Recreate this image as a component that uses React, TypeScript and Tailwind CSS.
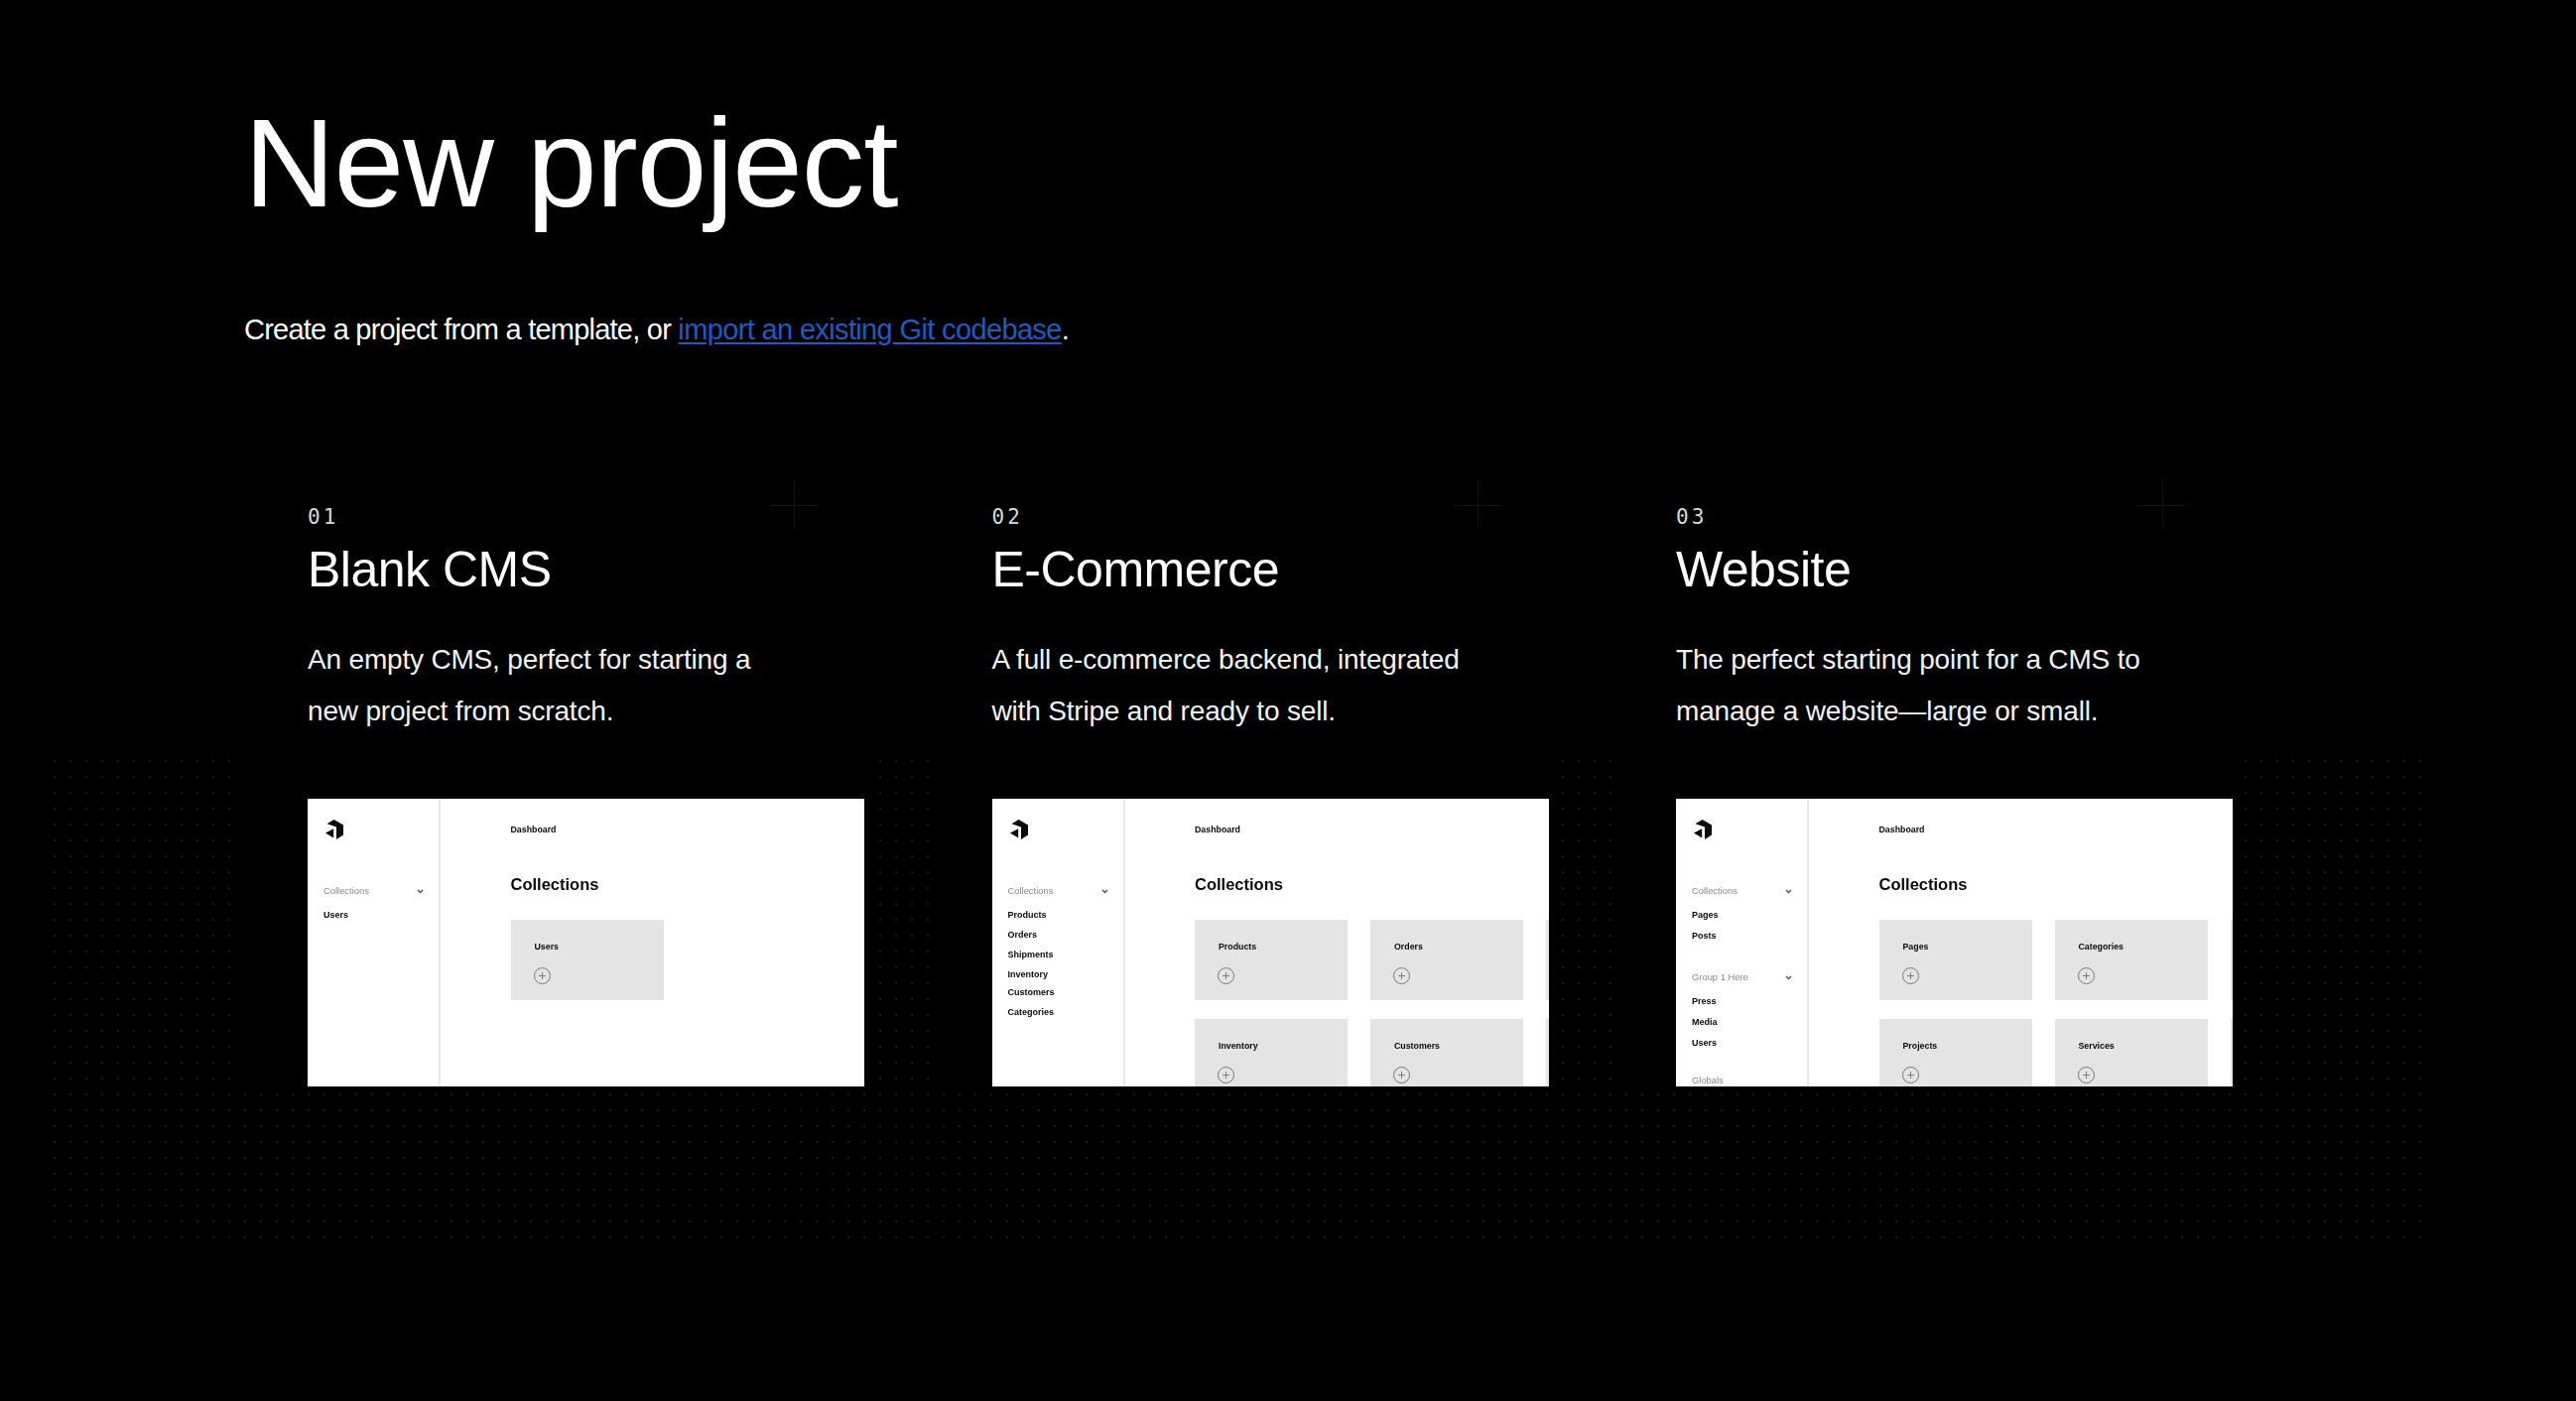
import React from "react";

type NavRow = { label: string; muted?: boolean; chevron?: boolean; className: string };

interface Template {
  num: string;
  title: string;
  lines: string[];
  nav: NavRow[];
  cards: string[];
}

const templates: Template[] = [
  {
    num: "01",
    title: "Blank CMS",
    lines: ["An empty CMS, perfect for starting a", "new project from scratch."],
    nav: [
      { label: "Collections", muted: true, chevron: true, className: "mt-[47px]" },
      { label: "Users", className: "mt-[14px]" },
    ],
    cards: ["Users"],
  },
  {
    num: "02",
    title: "E-Commerce",
    lines: ["A full e-commerce backend, integrated", "with Stripe and ready to sell."],
    nav: [
      { label: "Collections", muted: true, chevron: true, className: "mt-[47px]" },
      { label: "Products", className: "mt-[14px]" },
      { label: "Orders", className: "mt-[10px]" },
      { label: "Shipments", className: "mt-[10px]" },
      { label: "Inventory", className: "mt-[10px]" },
      { label: "Customers", className: "mt-[8px]" },
      { label: "Categories", className: "mt-[10px]" },
    ],
    cards: ["Products", "Orders", "", "Inventory", "Customers", ""],
  },
  {
    num: "03",
    title: "Website",
    lines: ["The perfect starting point for a CMS to", "manage a website\u2014large or small."],
    nav: [
      { label: "Collections", muted: true, chevron: true, className: "mt-[47px]" },
      { label: "Pages", className: "mt-[14px]" },
      { label: "Posts", className: "mt-[11px]" },
      { label: "Group 1 Here", muted: true, chevron: true, className: "mt-[32px]" },
      { label: "Press", className: "mt-[14px]" },
      { label: "Media", className: "mt-[11px]" },
      { label: "Users", className: "mt-[11px]" },
      { label: "Globals", muted: true, className: "mt-[28px]" },
    ],
    cards: ["Pages", "Categories", "", "Projects", "Services", ""],
  },
];

const Logo = () => (
  <svg width="19" height="20" viewBox="0 0 19 20" className="block" fill="#0a0a0a">
    <path d="M1.5 4.2 8.6 0 18 5.4V15.6L11 20V7.6Z" />
    <path d="M0 13.4 8.2 9.2V18.4Z" />
  </svg>
);

const Cross = () => (
  <svg
    width="48"
    height="48"
    viewBox="0 0 48 48"
    className="absolute right-[48px] top-[-24px]"
    stroke="#121212"
    strokeWidth="1"
  >
    <path d="M0 24.5H48M24.5 0V48" />
  </svg>
);

const Mock: React.FC<{ nav: NavRow[]; cards: string[] }> = ({ nav, cards }) => (
  <div className="flex h-[290px] w-[561px] overflow-hidden bg-white text-[#0a0a0a] blur-[0.35px]">
    <div className="h-full w-[134px] shrink-0 border-r-2 border-[#e8e8e8] pl-[16px]">
      <div className="ml-[2px] pt-[21px]">
        <Logo />
      </div>
      <div className="flex flex-col">
        {nav.map((row) => (
          <div
            key={row.label}
            className={`flex h-[10px] w-[101px] items-center justify-between leading-[10px] ${row.className} ${
              row.muted ? "text-[9.4px] text-[#8a8a8a]" : "text-[9px] font-bold"
            }`}
          >
            <span>{row.label}</span>
            {row.chevron && (
              <svg width="7" height="5" viewBox="0 0 7 5" fill="none" stroke="#555" strokeWidth="1.4">
                <path d="M1 1 3.5 3.6 6 1" />
              </svg>
            )}
          </div>
        ))}
      </div>
    </div>
    <div className="min-w-0 flex-1 pl-[70.5px]">
      <div className="pt-[25px] text-[8.8px] font-bold leading-[12px]">Dashboard</div>
      <div className="mt-[39px] text-[16.5px] font-bold leading-[20px]">Collections</div>
      <div className="mt-[26px] grid w-[500px] grid-cols-[154px_154px_154px] gap-x-[23px] gap-y-[19px]">
        {cards.map((label, i) => (
          <div key={i} className="h-[81px] bg-[#e4e4e4] pl-[24px] pt-[22px]">
            {label && (
              <>
                <div className="text-[8.8px] font-bold leading-[10px]">{label}</div>
                <div className="mt-[15.5px] ml-[-1px] flex h-[17px] w-[17px] items-center justify-center rounded-full border border-[#777] text-[#666]">
                  <svg width="7" height="7" viewBox="0 0 7 7" stroke="currentColor" strokeWidth="0.8">
                    <path d="M0 3.5H7M3.5 0V7" />
                  </svg>
                </div>
              </>
            )}
          </div>
        ))}
      </div>
    </div>
  </div>
);

export default function App() {
  return (
    <div className="relative h-[1412px] overflow-hidden bg-black text-white [font-family:'Liberation_Sans',Arial,sans-serif]">
      {/* dotted backdrop, the cards sit on top with a solid black */}
      <div className="absolute left-[47px] top-[759px] h-[496px] w-[2400px] bg-[radial-gradient(circle,#1c1c1c_1px,transparent_1px)] bg-[size:16px_16px]" />

      <div className="relative pl-[246px] pt-[89px]">
        <h1 className="text-[127px] font-normal leading-[150px] tracking-[-1.1px]">New project</h1>
        <p className="mt-[73px] text-[29px] leading-[40px] tracking-[-0.77px]">
          Create a project from a template, or{" "}
          <a href="#" className="tracking-[-0.64px] text-[#1a5cc4] underline underline-offset-[3px]">
            import an existing Git codebase
          </a>
          .
        </p>

        <div className="mt-[157px] grid grid-cols-[625.5px_625.5px_625.5px] gap-x-[64px]">
          {templates.map((t) => (
            <div key={t.num} className="relative bg-black pl-[64px]">
              <Cross />
              <div className="text-[21px] leading-[24px] tracking-[3px] text-[#d8d8d8] [font-family:'DejaVu_Sans_Mono',monospace]">
                {t.num}
              </div>
              <h2 className="mt-[13px] text-[50px] font-normal leading-[56px] tracking-[-0.5px]">{t.title}</h2>
              <p className="mt-[37px] text-[28px] leading-[52px] tracking-[-0.18px] text-[#f2f2f2]">
                {t.lines.map((line) => (
                  <span key={line} className="block">
                    {line}
                  </span>
                ))}
              </p>
              <div className="mt-[62px]">
                <Mock nav={t.nav} cards={t.cards} />
              </div>
            </div>
          ))}
        </div>
      </div>
    </div>
  );
}
